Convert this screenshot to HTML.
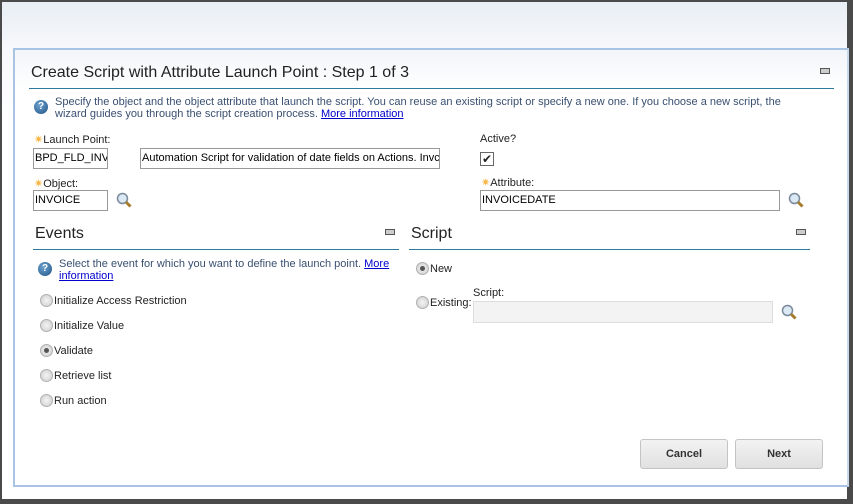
<!DOCTYPE html>
<html><head><style>
*{box-sizing:border-box;margin:0;padding:0}
body{width:853px;height:504px;position:relative;overflow:hidden;font-family:"Liberation Sans",Arial,sans-serif;font-size:11px;color:#222;background:#4a4a4a}
.a{position:absolute}
#frame{left:2px;top:2px;width:845px;height:497px;background:linear-gradient(#e8eef4,#f6f8fb 45px,#fff 120px)}
#panel{left:13px;top:48px;width:836px;height:439px;border:2px solid #a9c4e2;border-right-color:#c9d9ea;background:linear-gradient(#f2f5f9,#fff 40px)}
.h{font-size:17px;color:#222}
.line{height:1px;background:#2f7a99}
.min{width:10px;height:6px;border:1px solid #555;background:#ccc}
.help{width:14px;height:14px;border-radius:50%;background:radial-gradient(circle at 40% 35%,#6fa3cf,#1d5286);color:#fff;font-weight:bold;font-size:10px;text-align:center;line-height:14px}
.t{color:#3a5070}
a{color:#0000cc;text-decoration:underline}
.inp{border:1px solid #999;background:#fff;height:21px;padding:0 1px;line-height:19px;font-size:11px;white-space:nowrap;overflow:hidden;color:#000}
.star{color:#f7b84a}
.rad{width:13px;height:13px;border-radius:50%;border:1px solid #b0b0b0;background:radial-gradient(#f4f4f4,#ccc)}
.rad.on::after{content:"";position:absolute;left:3px;top:3px;width:5px;height:5px;border-radius:50%;background:#555}
.btn{width:88px;height:30px;border:1px solid #c4c4c4;border-radius:3px;background:linear-gradient(#f3f3f3,#e0e0e0);text-align:center;line-height:28px;font-weight:bold;color:#333}
</style></head><body>
<div class="a" id="frame"></div>
<div class="a" id="panel"></div>
<div class="a h" style="left:31px;top:64px;font-size:16px">Create Script with Attribute Launch Point : Step 1 of 3</div>
<div class="a min" style="left:820px;top:68px"></div>
<div class="a line" style="left:29px;top:88px;width:805px"></div>
<div class="a help" style="left:34px;top:100px">?</div>
<div class="a t" style="left:55px;top:96px;width:730px;line-height:12px">Specify the object and the object attribute that launch the script. You can reuse an existing script or specify a new one. If you choose a new script, the wizard guides you through the script creation process. <a>More information</a></div>
<div class="a" style="left:34px;top:133px"><span class="star">✷</span>Launch Point:</div>
<div class="a inp" style="left:33px;top:148px;width:75px">BPD_FLD_INV</div>
<div class="a inp" style="left:140px;top:148px;width:300px">Automation Script for validation of date fields on Actions. Invc</div>
<div class="a" style="left:34px;top:177px"><span class="star">✷</span>Object:</div>
<div class="a inp" style="left:33px;top:190px;width:75px">INVOICE</div>
<svg class="a" style="left:116px;top:192px" width="16" height="16"><circle cx="6.5" cy="6.5" r="5" fill="#dbe9f5" stroke="#7a8a9a" stroke-width="1.5"/><line x1="10" y1="10" x2="14.5" y2="14.5" stroke="#a57b2c" stroke-width="3"/></svg>
<div class="a" style="left:480px;top:133px">Active?</div>
<div class="a" style="left:480px;top:152px;width:14px;height:14px;border:1px solid #666;background:#fff;font-size:12px;line-height:12px;text-align:center">✔</div>
<div class="a" style="left:481px;top:176px"><span class="star">✷</span>Attribute:</div>
<div class="a inp" style="left:480px;top:190px;width:300px">INVOICEDATE</div>
<svg class="a" style="left:788px;top:192px" width="16" height="16"><circle cx="6.5" cy="6.5" r="5" fill="#dbe9f5" stroke="#7a8a9a" stroke-width="1.5"/><line x1="10" y1="10" x2="14.5" y2="14.5" stroke="#a57b2c" stroke-width="3"/></svg>
<div class="a h" style="left:35px;top:225px;font-size:16px">Events</div>
<div class="a min" style="left:385px;top:229px"></div>
<div class="a line" style="left:33px;top:249px;width:366px"></div>
<div class="a help" style="left:38px;top:262px">?</div>
<div class="a t" style="left:59px;top:258px;width:340px;line-height:12px">Select the event for which you want to define the launch point. <a>More information</a></div>
<div class="a rad" style="left:40px;top:294px"></div><div class="a" style="left:54px;top:295px">Initialize Access Restriction</div>
<div class="a rad" style="left:40px;top:319px"></div><div class="a" style="left:54px;top:320px">Initialize Value</div>
<div class="a rad on" style="left:40px;top:344px"></div><div class="a" style="left:54px;top:345px">Validate</div>
<div class="a rad" style="left:40px;top:369px"></div><div class="a" style="left:54px;top:370px">Retrieve list</div>
<div class="a rad" style="left:40px;top:394px"></div><div class="a" style="left:54px;top:395px">Run action</div>
<div class="a h" style="left:411px;top:225px;font-size:16px">Script</div>
<div class="a min" style="left:796px;top:229px"></div>
<div class="a line" style="left:409px;top:249px;width:401px"></div>
<div class="a rad on" style="left:416px;top:262px"></div><div class="a" style="left:430px;top:263px">New</div>
<div class="a rad" style="left:416px;top:296px"></div><div class="a" style="left:430px;top:297px">Existing:</div>
<div class="a" style="left:473px;top:287px">Script:</div>
<div class="a" style="left:473px;top:301px;width:300px;height:22px;border:1px solid #ddd;background:#f3f3f3"></div>
<svg class="a" style="left:781px;top:304px" width="16" height="16"><circle cx="6.5" cy="6.5" r="5" fill="#dbe9f5" stroke="#7a8a9a" stroke-width="1.5"/><line x1="10" y1="10" x2="14.5" y2="14.5" stroke="#a57b2c" stroke-width="3"/></svg>
<div class="a btn" style="left:640px;top:439px">Cancel</div>
<div class="a btn" style="left:735px;top:439px">Next</div>
</body></html>
